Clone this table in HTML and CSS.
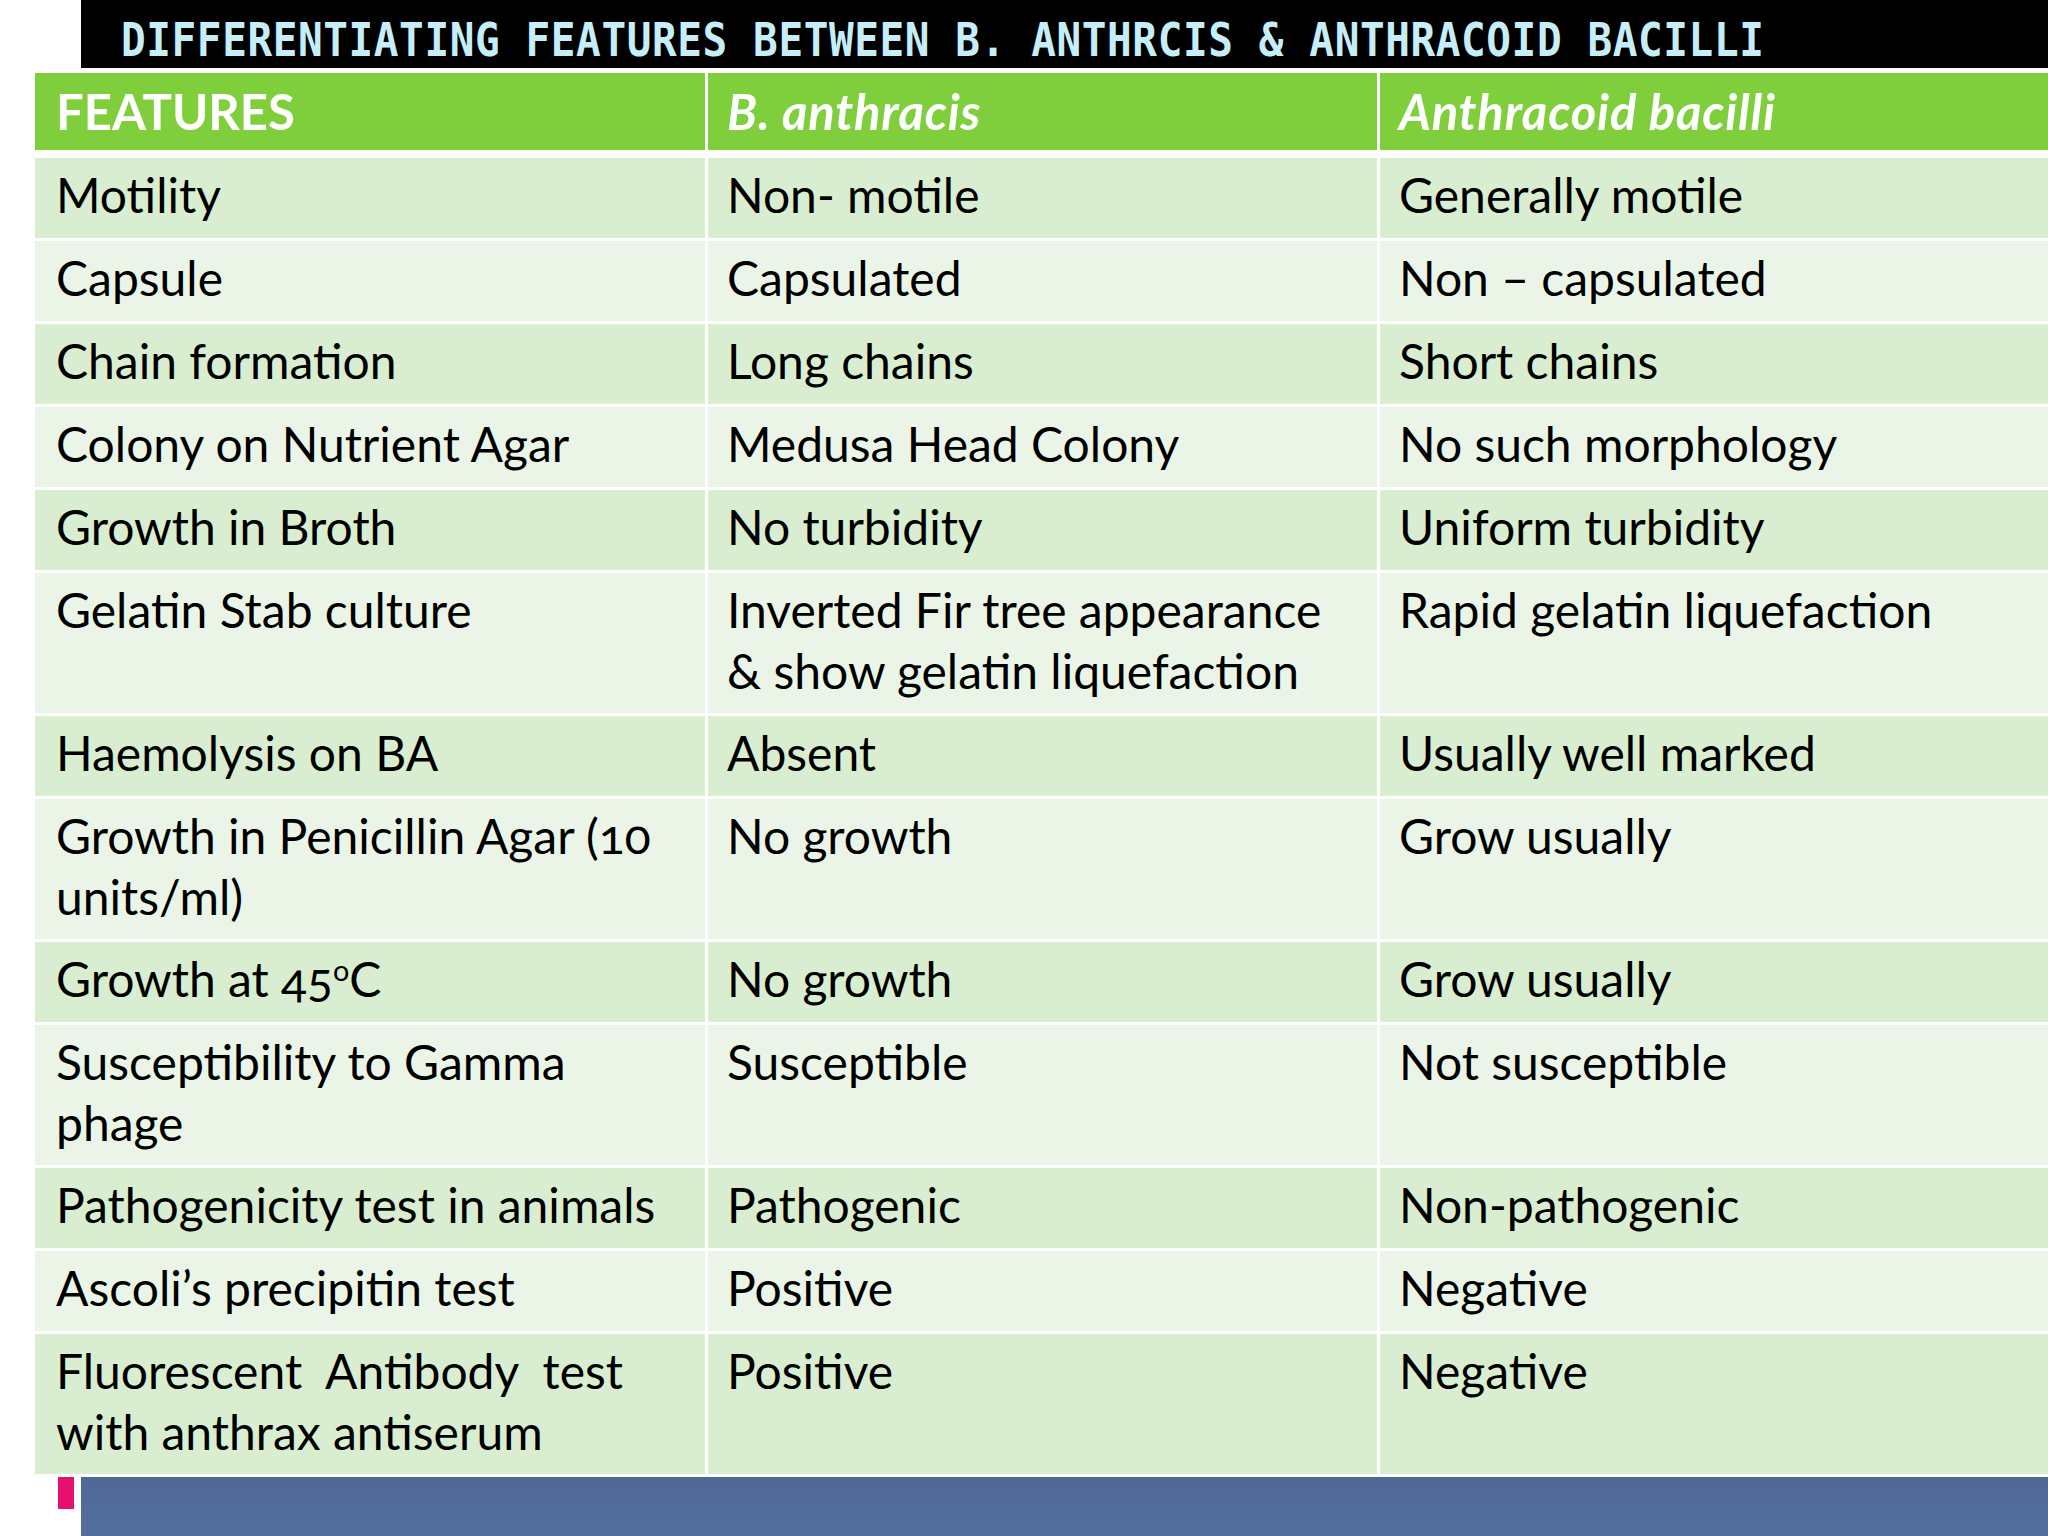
FILE: index.html
```html
<!DOCTYPE html>
<html>
<head>
<meta charset="utf-8">
<link rel="stylesheet" href="styles.css">
</head>
<body>
<div class="slide">
  <div class="titlebar"><h1 class="title">DIFFERENTIATING FEATURES BETWEEN B. ANTHRCIS &amp; ANTHRACOID BACILLI</h1></div>
  <div class="table">
    <div class="row head">
      <div class="cell">FEATURES</div>
      <div class="cell it">B. anthracis</div>
      <div class="cell it">Anthracoid bacilli</div>
    </div>
    <div class="row dark"><div class="cell">Motility</div><div class="cell">Non- motile</div><div class="cell">Generally motile</div></div>
    <div class="row light"><div class="cell">Capsule</div><div class="cell">Capsulated</div><div class="cell">Non – capsulated</div></div>
    <div class="row dark"><div class="cell">Chain formation</div><div class="cell">Long chains</div><div class="cell">Short chains</div></div>
    <div class="row light"><div class="cell">Colony on Nutrient Agar</div><div class="cell">Medusa Head Colony</div><div class="cell">No such morphology</div></div>
    <div class="row dark"><div class="cell">Growth in Broth</div><div class="cell">No turbidity</div><div class="cell">Uniform turbidity</div></div>
    <div class="row light tall"><div class="cell">Gelatin Stab culture</div><div class="cell">Inverted Fir tree appearance<br>&amp; show gelatin liquefaction</div><div class="cell">Rapid gelatin liquefaction</div></div>
    <div class="row dark"><div class="cell">Haemolysis on BA</div><div class="cell">Absent</div><div class="cell">Usually well marked</div></div>
    <div class="row light tall"><div class="cell">Growth in Penicillin Agar (10<br>units/ml)</div><div class="cell">No growth</div><div class="cell">Grow usually</div></div>
    <div class="row dark"><div class="cell">Growth at 45<sup class="deg">o</sup>C</div><div class="cell">No growth</div><div class="cell">Grow usually</div></div>
    <div class="row light tall"><div class="cell">Susceptibility to Gamma<br>phage</div><div class="cell">Susceptible</div><div class="cell">Not susceptible</div></div>
    <div class="row dark"><div class="cell">Pathogenicity test in animals</div><div class="cell">Pathogenic</div><div class="cell">Non-pathogenic</div></div>
    <div class="row light"><div class="cell">Ascoli’s precipitin test</div><div class="cell">Positive</div><div class="cell">Negative</div></div>
    <div class="row dark tall"><div class="cell">Fluorescent&nbsp; Antibody&nbsp; test<br>with anthrax antiserum</div><div class="cell">Positive</div><div class="cell">Negative</div></div>
  </div>
  <div class="footer">
    <div class="mark"></div>
    <div class="bluebar"></div>
  </div>
</div>
</body>
</html>
```
FILE: styles.css
```css
html, body {
  margin: 0;
  padding: 0;
  background: #ffffff;
}
.slide {
  width: 2048px;
  height: 1536px;
  overflow: hidden;
  display: flex;
  flex-direction: column;
  background: #ffffff;
}
.titlebar {
  margin-left: 81px;
  height: 68px;
  background: #000000;
  display: flex;
  align-items: flex-end;
  padding-left: 40px;
  box-sizing: border-box;
}
.title {
  margin: 0 0 4px 0;
  font-family: "DejaVu Sans Mono", "Liberation Mono", monospace;
  font-weight: bold;
  font-size: 41px;
  line-height: 1;
  letter-spacing: 0.6px;
  color: #c6eef9;
  white-space: nowrap;
  transform: scaleY(1.12);
  transform-origin: left bottom;
}
.table {
  margin-left: 35px;
  margin-top: 5px;
  display: flex;
  flex-direction: column;
  gap: 3px;
}
.row {
  display: grid;
  grid-template-columns: 670px 669px 668px;
  column-gap: 3px;
  height: 80px;
}
.row.tall {
  height: 140px;
}
.row.head {
  height: 77px;
  margin-bottom: 5px;
}
.cell {
  font-family: "Lato", "Open Sans", sans-serif;
  font-size: 48px;
  line-height: 61px;
  color: #000000;
  padding: 6px 10px 0 21px;
  box-sizing: border-box;
  font-variant-numeric: oldstyle-nums;
  white-space: nowrap;
}
.row .cell + .cell {
  padding-left: 19px;
}
.dark .cell {
  background: #d9edd0;
}
.light .cell {
  background: #ebf5e7;
}
.head .cell {
  background: #7fcf3c;
  color: #ffffff;
  font-weight: bold;
  font-size: 49px;
  padding-top: 8px;
}
.head .cell.it {
  font-style: italic;
  letter-spacing: 0.8px;
}
.deg {
  font-size: 0.6em;
  line-height: 0;
  vertical-align: 0.55em;
}
.footer {
  margin-top: 3px;
  flex: 1;
  display: flex;
  padding-left: 58px;
}
.mark {
  width: 16px;
  height: 32px;
  background: #e6116f;
}
.bluebar {
  margin-left: 7px;
  flex: 1;
  background: linear-gradient(#4f6894, #546fa0);
}
```
